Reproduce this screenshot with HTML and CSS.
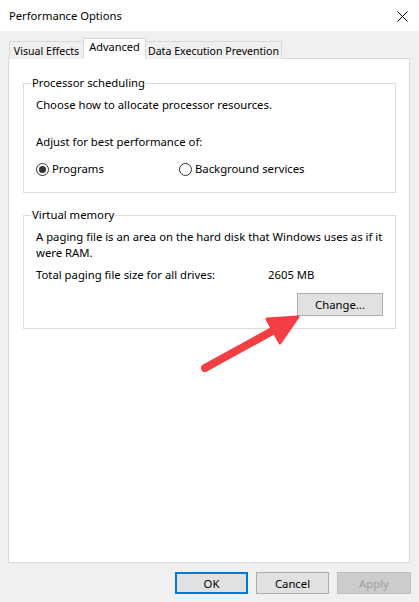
FILE: index.html
```html
<!DOCTYPE html>
<html lang="en">
<head>
  <meta charset="UTF-8"/>
  <title>Performance Options</title>
  <link rel="stylesheet" href="styles.css">
</head>
<body>

  <div class="window">
    <div class="titlebar">
      <span class="title">Performance Options</span>
      <svg class="close" width="11" height="11" viewBox="0 0 11 11">
        <path d="M0.5 0.5 L10.5 10.5 M10.5 0.5 L0.5 10.5" stroke="#000" stroke-width="1" fill="none"/>
      </svg>
    </div>

    <div class="body">
      <div class="tabs">
        <div class="tab tab-visual">Visual Effects</div>
        <div class="tab active">Advanced</div>
        <div class="tab tab-dep">Data Execution Prevention</div>
      </div>

      <div class="panel">
        <fieldset class="group">
          <legend>Processor scheduling</legend>
          <p>Choose how to allocate processor resources.</p>
          <p class="adjust">Adjust for best performance of:</p>
          <div class="radios">
            <label class="radio checked"><span class="dot"></span>Programs</label>
            <label class="radio"><span class="dot"></span>Background services</label>
          </div>
        </fieldset>

        <fieldset class="group vm">
          <legend>Virtual memory</legend>
          <p>A paging file is an area on the hard disk that Windows uses as if it were RAM.</p>
          <div class="total">
            <span class="total-label">Total paging file size for all drives:</span>
            <span>2605 MB</span>
          </div>
          <div class="change-row">
            <button class="btn">Change...</button>
          </div>
        </fieldset>
      </div>

      <div class="footer">
        <button class="btn default">OK</button>
        <button class="btn">Cancel</button>
        <button class="btn apply" disabled>Apply</button>
      </div>
    </div>

    <!-- red pointer arrow drawn over the dialog -->
    <svg class="arrow" width="120" height="70" viewBox="0 0 120 70">
      <line x1="9" y1="63" x2="80" y2="24" stroke="#f23f43" stroke-width="8" stroke-linecap="round"/>
      <polygon points="102,12 71,14 84,38" fill="#f23f43" stroke="#f23f43" stroke-width="3" stroke-linejoin="round"/>
    </svg>
  </div>

</body>
</html>
```

FILE: styles.css
```css
* {
  margin: 0; padding: 0;
  box-sizing: border-box;
}

body {
  background: #f0f0f0;
  font-family: "Noto Sans", "Open Sans", sans-serif;
  font-size: 11.3px;
  line-height: 16px;
  color: #000;
}

.window {
  position: relative;
  width: 419px;
  height: 602px;
}

.titlebar {
  height: 31px;
  background: #fff;
  display: flex;
  align-items: center;
  justify-content: space-between;
  padding: 0 11px 0 9px;
}

.title {
  font-size: 11.2px;
}

.close {
  margin-top: 1px;
}

.body {
  padding: 7px 9px 0 8px;
}

.tabs {
  display: flex;
  align-items: flex-end;
  padding-left: 1px;
  height: 21px;
  position: relative;
  z-index: 1;
  margin-bottom: -1px;
}

.tab {
  height: 18px;
  border: 1px solid #d9d9d9;
  border-bottom: none;
  background: #f0f0f0;
  font-size: 10.6px;
  line-height: 18px;
  text-align: center;
  white-space: nowrap;
}

.tab-visual {
  width: 75px;
}

.tab-dep {
  width: 137px;
}

.tab + .tab {
  margin-left: -1px;
}

.tab.active {
  width: 63px;
  height: 21px;
  background: #fff;
  font-size: 11px;
  line-height: 16px;
  position: relative;
  z-index: 2;
}

.panel {
  background: #fff;
  border: 1px solid #d9d9d9;
  height: 505px;
  padding: 16px 13px 0 14px;
}

.group {
  border: 1px solid #dcdcdc;
  padding: 6px 12px 15px 12px;
  min-width: 0;
}

.group legend {
  padding: 0 1px;
  margin-left: -5px;
  line-height: 16px;
}

.group p {
  margin: 0;
}

.group .adjust {
  margin-top: 21px;
}

.radios {
  display: flex;
  margin-top: 11px;
}

.radio {
  display: flex;
  align-items: center;
  width: 143px;
}

.dot {
  width: 13px;
  height: 13px;
  border: 1px solid #333;
  border-radius: 50%;
  margin-right: 3px;
  position: relative;
  background: #fff;
}

.radio.checked .dot::after {
  content: "";
  position: absolute;
  left: 2px; top: 2px;
  width: 7px;
  height: 7px;
  border-radius: 50%;
  background: #333;
}

.vm {
  margin-top: 14px;
  padding-bottom: 12px;
}

.total {
  display: flex;
  margin-top: 6px;
}

.total-label {
  width: 232px;
}

.change-row {
  display: flex;
  justify-content: flex-end;
  margin-top: 10px;
}

.btn {
  font-family: inherit;
  font-size: 11.3px;
  color: #000;
  background: #e1e1e1;
  border: 1px solid #adadad;
  height: 23px;
  width: 86px;
}

.footer {
  display: flex;
  justify-content: flex-end;
  gap: 8px;
  margin-top: 9px;
  margin-right: -1px;
}

.footer .btn {
  width: 73px;
  height: 22px;
}

.footer .apply {
  width: 74px;
}

.btn.default {
  border: 2px solid #0078d7;
}

.btn:disabled {
  background: #cccccc;
  border-color: #bfbfbf;
  color: #a0a0a0;
}

.arrow {
  position: absolute;
  left: 196px;
  top: 305px;
}
```
